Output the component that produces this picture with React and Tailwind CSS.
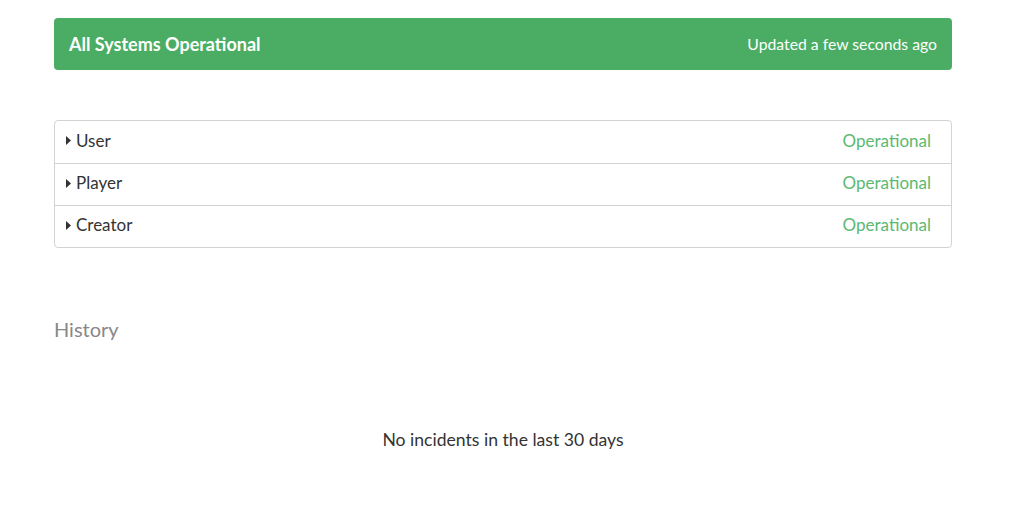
const components = ["User", "Player", "Creator"];

const Caret = () => (
  <svg width="6" height="9" viewBox="0 0 6 9" className="ml-[1px] mr-[4px] shrink-0">
    <path d="M0 0 L5 4.5 L0 9 Z" fill="#333" />
  </svg>
);

export default function App() {
  return (
    <div className="min-h-screen bg-white font-['Lato',sans-serif] text-[#333]">
      <div className="ml-[54px] w-[898px] pt-[18px]">
        <div className="flex h-[52px] items-center justify-between rounded-[4px] bg-[#4aad63] pl-[15px] pr-[15px] text-white">
          <span className="text-[18px] font-bold">All Systems Operational</span>
          <span className="text-[15.75px]">Updated a few seconds ago</span>
        </div>

        <div className="mt-[50px] rounded-[4px] border border-[#d3d3d3]">
          {components.map((name, i) => (
            <div
              key={name}
              className={`flex h-[42px] items-center justify-between pb-[3px] pl-[10px] pr-[20px] ${
                i > 0 ? "border-t border-[#d3d3d3]" : ""
              }`}
            >
              <div className="flex items-center text-[17px] text-[#333]">
                <Caret />
                {name}
              </div>
              <span className="text-[17px] text-[#5cb971]">Operational</span>
            </div>
          ))}
        </div>

        <h2 className="mt-[66px] text-[20px] text-[#888]">History</h2>

        <p className="mt-[83px] text-center text-[17.6px] text-[#333]">
          No incidents in the last 30 days
        </p>
      </div>
    </div>
  );
}
